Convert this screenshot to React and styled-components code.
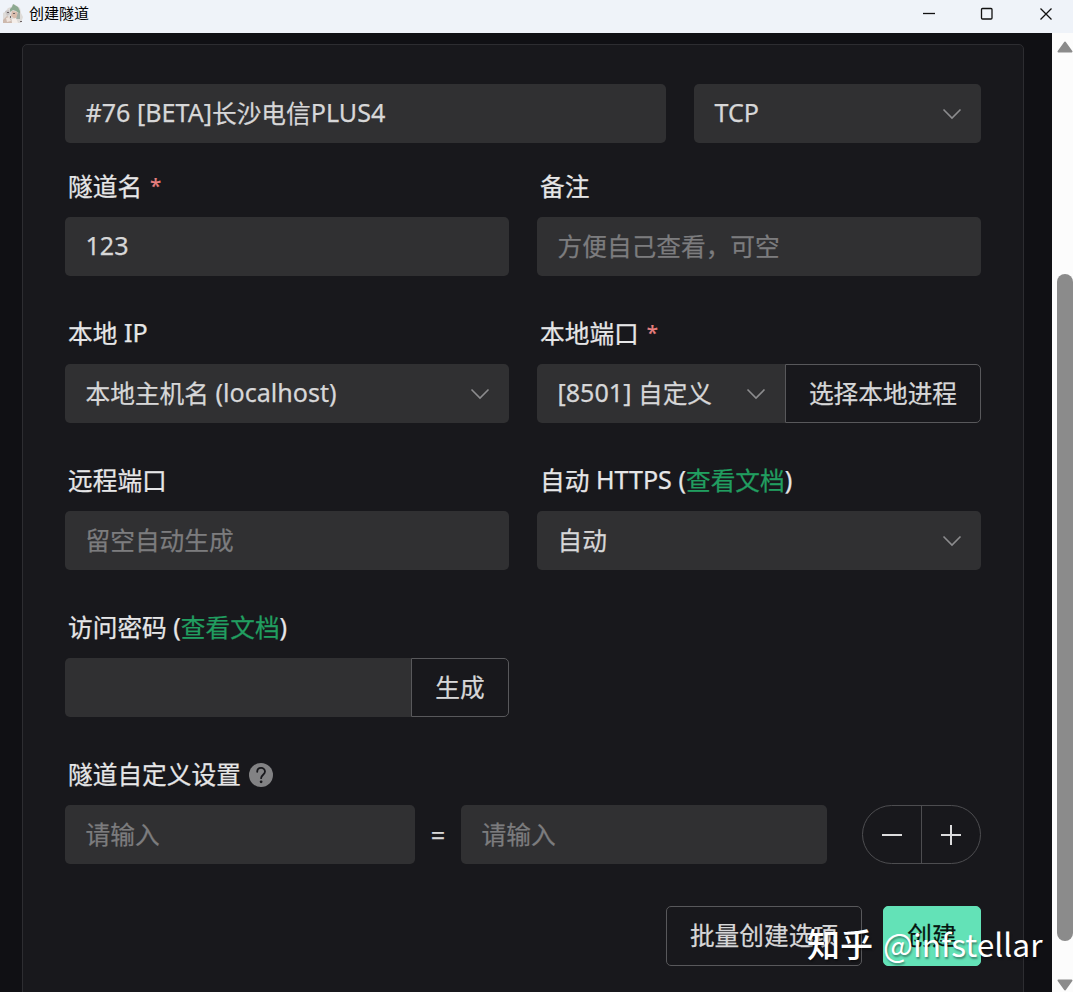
import React from "react";
import styled, { createGlobalStyle } from "styled-components";

const Chevron = () => (
  <ChevronIcon viewBox="0 0 20 12">
    <path d="M1.5 1.5 L10 10 L18.5 1.5" fill="none" stroke="currentColor" strokeWidth="1.6" />
  </ChevronIcon>
);

const DocLink = () => (
  <>
    <Latin>{" ("}</Latin>
    <Anchor>查看文档</Anchor>
    <Latin>)</Latin>
  </>
);

const FormItem = ({ label, children }) => (
  <Item>
    <Label>{label}</Label>
    <Row>{children}</Row>
  </Item>
);

const Select = ({ children, ...props }) => (
  <Field {...props}>
    <Value>{children}</Value>
    <Chevron />
  </Field>
);

function App() {
  return (
    <Window>
      <GlobalStyle />
      <TitleBar>
        <Avatar viewBox="0 0 20 20">
          <path d="M0 9 L2 8 L5 4 L8 3 L11 0 L17 4 L18 9 L20 13 L18 19 L0 19 Z" fill="#dedbd8" />
          <path d="M7 5 L9 3 L10 0 L15 3 L17 7 L17 10 L13 7 L10 6 L7 8 Z" fill="#8ca991" />
          <path d="M9 7 L14 8 L15 12 L12 15 L8 12 Z" fill="#d9bcab" />
          <path d="M15 8 L17 10 L17 15 L13 15 Z" fill="#a3aea5" />
          <path d="M2 7 L6 6 L7 10 L4 12 Z" fill="#c8c5c4" />
          <path d="M0 16 L4 12 L8 15 L9 19 L0 19 Z" fill="#cdb9ad" />
          <path d="M3 14 L6 13 L8 17 L4 18 Z" fill="#eee3dc" />
          <path d="M9 15 L13 14 L15 19 L9 19 Z" fill="#f4eeea" />
          <path d="M10 9 h2 v1 h-2 Z M17 17 h2 v1 h-2 Z M7 12 h1 v2 h-1 Z M4 8 h2 v1 h-2 Z" fill="#6b6265" />
        </Avatar>
        <Caption>创建隧道</Caption>
        <WindowControls viewBox="0 0 130 14">
          <path d="M0 6.5 h12" />
          <rect x="58.5" y="1.5" width="10.5" height="10.5" rx="1" />
          <path d="M117.5 1.5 l11 11 M128.5 1.5 l-11 11" />
        </WindowControls>
      </TitleBar>
      <Body>
        <Page>
          <Card>
            <Row $gap={28}>
              <Field $width={601}>
                <Value><Latin>#76 [BETA]</Latin>长沙电信<Latin>PLUS4</Latin></Value>
              </Field>
              <Select><Latin>TCP</Latin></Select>
            </Row>
            <Form>
              <FormItem label={<>隧道名<Required>*</Required></>}>
                <Field><Value><Latin>123</Latin></Value></Field>
              </FormItem>
              <FormItem label="备注">
                <Field><Placeholder>方便自己查看，可空</Placeholder></Field>
              </FormItem>
              <FormItem label={<>本地<Latin> IP</Latin></>}>
                <Select>本地主机名<Latin> (localhost)</Latin></Select>
              </FormItem>
              <FormItem label={<>本地端口<Required>*</Required></>}>
                <Select $joined><Latin>[8501] </Latin>自定义</Select>
                <Button $joined $width={196}>选择本地进程</Button>
              </FormItem>
              <FormItem label="远程端口">
                <Field><Placeholder>留空自动生成</Placeholder></Field>
              </FormItem>
              <FormItem label={<>自动<Latin> HTTPS</Latin><DocLink /></>}>
                <Select>自动</Select>
              </FormItem>
              <FormItem label={<>访问密码<DocLink /></>}>
                <Field $joined />
                <Button $joined $width={98}>生成</Button>
              </FormItem>
            </Form>
            <Settings>
              <Label>
                隧道自定义设置
                <HelpIcon viewBox="0 0 24 24">
                  <circle cx="12" cy="12" r="12" fill="#828284" />
                  <path
                    d="M8.2 8.8 C8.2 3.6 16 3.7 16 8.6 C16 11.7 12.1 11.8 12.1 15.2"
                    fill="none"
                    stroke="#18181c"
                    strokeWidth="1.8"
                    strokeLinecap="round"
                  />
                  <circle cx="12.1" cy="18.8" r="1.4" fill="#18181c" />
                </HelpIcon>
              </Label>
              <Row>
                <Field $width={350}><Placeholder>请输入</Placeholder></Field>
                <Equals>=</Equals>
                <Field $width={366}><Placeholder>请输入</Placeholder></Field>
                <Stepper>
                  <StepButton>
                    <StepIcon viewBox="0 0 20 20"><path d="M0 10 H20" /></StepIcon>
                  </StepButton>
                  <StepButton>
                    <StepIcon viewBox="0 0 20 20"><path d="M0 10 H20 M10 0 V20" /></StepIcon>
                  </StepButton>
                </Stepper>
              </Row>
            </Settings>
            <Footer>
              <Button $width={196} $height={60}>批量创建选项</Button>
              <Button $primary $width={98} $height={60}>创建</Button>
            </Footer>
          </Card>
        </Page>
        <Scrollbar>
          <Arrow viewBox="0 0 16 12"><path d="M8 1.5 L14.5 10.5 H1.5 Z" /></Arrow>
          <Thumb />
          <Arrow viewBox="0 0 16 12"><path d="M8 10.5 L14.5 1.5 H1.5 Z" /></Arrow>
        </Scrollbar>
      </Body>
      <Watermark>
        <Brand>知乎</Brand>
        <span>@infstellar</span>
      </Watermark>
    </Window>
  );
}

const GlobalStyle = createGlobalStyle`
  * {
    box-sizing: border-box;
  }
  body {
    margin: 0;
    overflow: hidden;
    font-family: "Noto Sans", "Noto Sans CJK SC", sans-serif;
  }
`;

const Window = styled.div`
  position: relative;
  display: flex;
  flex-direction: column;
  width: 1073px;
  height: 992px;
  overflow: hidden;
  background: #101014;
`;

const TitleBar = styled.header`
  display: flex;
  align-items: center;
  flex: 0 0 33px;
  padding: 0 20px 5px 3px;
  background: #eff3f9;
`;

const Avatar = styled.svg`
  width: 20px;
  height: 20px;
`;

const Caption = styled.span`
  margin: -2px 0 0 6px;
  font: 15px/20px "Noto Sans CJK SC", sans-serif;
  color: #000;
`;

const WindowControls = styled.svg`
  width: 130px;
  height: 14px;
  margin-left: auto;
  fill: none;
  stroke: #111;
  stroke-width: 1.3;
`;

const Body = styled.div`
  display: flex;
  flex: 1;
  min-height: 0;
`;

const Page = styled.main`
  flex: 1;
  padding: 11px 28px 0 22px;
  overflow: hidden;
`;

const Card = styled.section`
  height: 1000px;
  padding: 39px 42px;
  border: 1px solid #2d2d31;
  border-radius: 5px;
  background: #18181c;
  -webkit-text-stroke-width: 0.25px;
`;

const Row = styled.div`
  display: flex;
  gap: ${({ $gap }) => $gap || 0}px;
`;

const Form = styled.div`
  display: grid;
  grid-template-columns: 1fr 1fr;
  gap: 32px 28px;
  margin-top: 18px;
`;

const Item = styled.div`
  min-width: 0;
`;

const Latin = styled.span`
  font-size: 25.1px;
  line-height: 36px;
  vertical-align: 1px;
  white-space: pre;
`;

const Label = styled.div`
  display: flex;
  align-items: center;
  height: 56px;
  padding: 0 0 5px 3px;
  font-size: 24.7px;
  line-height: 40px;
  white-space: pre;
  color: #e6e6e7;

  ${Latin} {
    margin-top: -3px;
  }
`;

const Required = styled.span`
  margin: -3px 0 0 8px;
  font-size: 20.5px;
  color: #e88080;
`;

const Anchor = styled.a`
  color: #219e60;
`;

const Field = styled.div`
  display: flex;
  align-items: center;
  justify-content: space-between;
  flex: ${({ $width }) => ($width ? `0 0 ${$width}px` : "1")};
  min-width: 0;
  height: 59px;
  padding: 0 19px 0 20.5px;
  border-radius: ${({ $joined }) => ($joined ? "5px 0 0 5px" : "5px")};
  background: #303032;
  font-size: 24.7px;
  line-height: 40px;
  white-space: nowrap;
`;

const Value = styled.span`
  color: #d7d7d8;
`;

const Placeholder = styled.span`
  color: #7c7c7e;
`;

const ChevronIcon = styled.svg`
  width: 20px;
  height: 12px;
  color: #8c8c8e;
`;

const Button = styled.button`
  width: ${({ $width }) => $width}px;
  height: ${({ $height }) => $height || 59}px;
  padding: 0;
  border: 1px solid ${({ $primary }) => ($primary ? "#63e2b7" : "#58585b")};
  border-radius: ${({ $joined }) => ($joined ? "0 5px 5px 0" : "5px")};
  background: ${({ $primary }) => ($primary ? "#63e2b7" : "transparent")};
  font-family: inherit;
  font-size: 24.7px;
  line-height: 40px;
  color: ${({ $primary }) => ($primary ? "#06150f" : "#d7d7d8")};
`;

const Settings = styled.div`
  margin-top: 32px;
`;

const HelpIcon = styled.svg`
  width: 24px;
  height: 24px;
  margin-left: 8px;
`;

const Equals = styled.span`
  width: 46px;
  height: 59px;
  text-align: center;
  font-size: 25.3px;
  line-height: 61px;
  color: #d7d7d8;
`;

const Stepper = styled.div`
  display: flex;
  width: 119px;
  height: 59px;
  margin-left: auto;
  border: 1px solid #4d4d50;
  border-radius: 30px;
`;

const StepButton = styled.button`
  display: flex;
  align-items: center;
  justify-content: center;
  flex: 1;
  padding: 0;
  border: 0;
  background: transparent;
  & + & {
    border-left: 1px solid #4d4d50;
  }
`;

const StepIcon = styled.svg`
  width: 20px;
  height: 20px;
  stroke: #dcdcdd;
  stroke-width: 2;
`;

const Footer = styled.div`
  display: flex;
  justify-content: flex-end;
  gap: 21px;
  margin-top: 42px;
`;

const Scrollbar = styled.div`
  display: flex;
  flex-direction: column;
  align-items: center;
  justify-content: space-between;
  flex: 0 0 21px;
  padding: 8px 0 1px 5px;
  background: #fcfcfc;
`;

const Arrow = styled.svg`
  flex: none;
  width: 16px;
  height: 12px;
  fill: #8b8b8b;
  stroke: #8b8b8b;
  stroke-width: 2;
  stroke-linejoin: round;
`;

const Thumb = styled.div`
  width: 16px;
  height: 667px;
  margin-top: 183px;
  border-radius: 8px;
  background: #8b8b8b;
`;

const Watermark = styled.div`
  position: absolute;
  left: 807px;
  top: 920px;
  display: flex;
  align-items: center;
  gap: 10px;
  font: 31.7px/46px "Noto Sans CJK SC", sans-serif;
  color: #fff;
  text-shadow: 1px 2px 2px rgba(0, 0, 0, 0.4);
`;

const Brand = styled.span`
  font-size: 33px;
  font-weight: 500;
`;

export default App;
